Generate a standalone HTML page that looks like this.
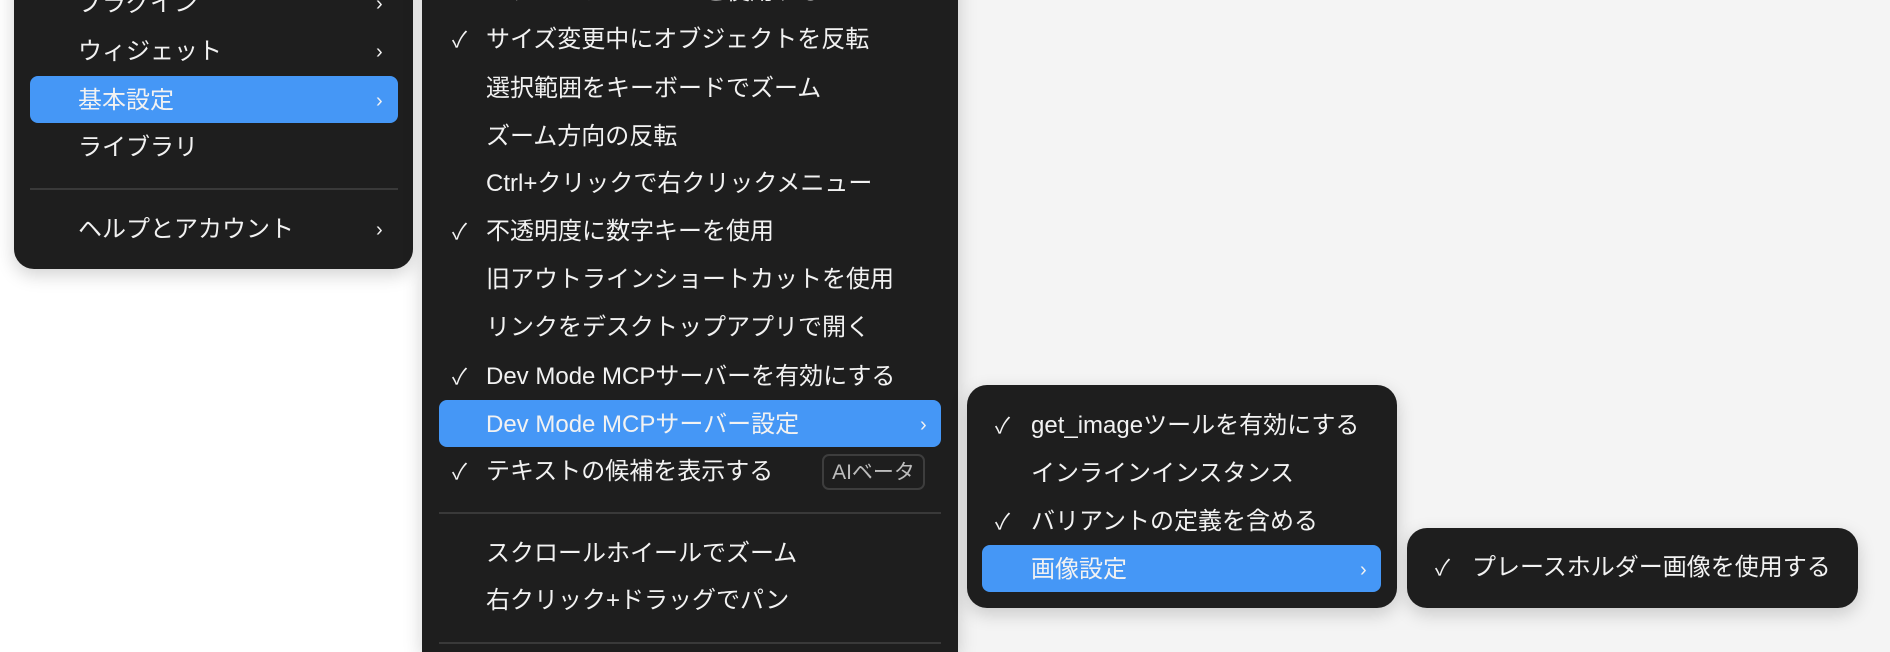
<!DOCTYPE html>
<html><head><meta charset="utf-8"><style>
*{margin:0;padding:0;box-sizing:border-box}
html{width:1890px;height:652px;overflow:hidden}
body{width:1890px;height:652px;overflow:hidden;background:#fff;position:relative;font-family:"Liberation Sans","Noto Sans CJK JP",sans-serif;color:#f2f2f2;font-size:24px}
.gray{position:absolute;left:958px;top:0;width:932px;height:652px;background:#f4f4f4}
.menu{position:absolute;background:#1e1e1e;box-shadow:0 6px 18px rgba(0,0,0,.18);overflow:hidden}
.it{position:absolute;height:48px;line-height:48px;white-space:nowrap;top:0;margin-top:3px}
.hl{position:absolute;background:#4597f6;border-radius:8px}
.ck{position:absolute;font-size:22px}
.chev{position:absolute;font-size:20px}
.div{position:absolute;height:2px;background:#393939}
.badge{position:absolute;border:2px solid #3d3d3d;border-radius:7px;color:#bdbdbd;font-size:21px;line-height:34px;text-align:center}
</style></head><body>
<div class="gray"></div>

<div class="menu" style="left:14px;top:-40px;width:399px;height:309px;border-radius:20px">
  <div class="hl" style="left:16px;top:116px;width:368px;height:47px"></div>
  <div class="it" style="left:64px;top:17px">プラグイン</div><div class="chev it" style="left:362px;top:17px">›</div>
  <div class="it" style="left:64px;top:65px">ウィジェット</div><div class="chev it" style="left:362px;top:65px">›</div>
  <div class="it" style="left:64px;top:114px">基本設定</div><div class="chev it" style="left:362px;top:114px">›</div>
  <div class="it" style="left:64px;top:161px">ライブラリ</div>
  <div class="div" style="left:16px;top:228px;width:368px"></div>
  <div class="it" style="left:64px;top:243px">ヘルプとアカウント</div><div class="chev it" style="left:362px;top:243px">›</div>
</div>

<div class="menu" style="left:422px;top:-40px;width:536px;height:692px;border-radius:0">
  <div class="hl" style="left:17px;top:440px;width:502px;height:47px"></div>
  <div class="it" style="left:64px;top:5px">ピクセルプレビューを使用する</div>
  <div class="ck it" style="left:30px;top:53px">✓</div><div class="it" style="left:64px;top:53px">サイズ変更中にオブジェクトを反転</div>
  <div class="it" style="left:64px;top:102px">選択範囲をキーボードでズーム</div>
  <div class="it" style="left:64px;top:150px">ズーム方向の反転</div>
  <div class="it" style="left:64px;top:197px">Ctrl+クリックで右クリックメニュー</div>
  <div class="ck it" style="left:30px;top:245px">✓</div><div class="it" style="left:64px;top:245px">不透明度に数字キーを使用</div>
  <div class="it" style="left:64px;top:293px">旧アウトラインショートカットを使用</div>
  <div class="it" style="left:64px;top:341px">リンクをデスクトップアプリで開く</div>
  <div class="ck it" style="left:30px;top:390px">✓</div><div class="it" style="left:64px;top:390px">Dev Mode MCPサーバーを有効にする</div>
  <div class="it" style="left:64px;top:438px">Dev Mode MCPサーバー設定</div><div class="chev it" style="left:498px;top:438px">›</div>
  <div class="ck it" style="left:30px;top:485px">✓</div><div class="it" style="left:64px;top:485px">テキストの候補を表示する</div>
  <div class="badge" style="left:400px;top:494px;width:103px;height:36px">AIベータ</div>
  <div class="div" style="left:17px;top:552px;width:502px"></div>
  <div class="it" style="left:64px;top:567px">スクロールホイールでズーム</div>
  <div class="it" style="left:64px;top:614px">右クリック+ドラッグでパン</div>
  <div class="div" style="left:17px;top:682px;width:502px"></div>
</div>

<div class="menu" style="left:967px;top:385px;width:430px;height:223px;border-radius:20px">
  <div class="hl" style="left:15px;top:160px;width:399px;height:47px"></div>
  <div class="ck it" style="left:28px;top:14px">✓</div><div class="it" style="left:64px;top:14px">get_imageツールを有効にする</div>
  <div class="it" style="left:64px;top:62px">インラインインスタンス</div>
  <div class="ck it" style="left:28px;top:110px">✓</div><div class="it" style="left:64px;top:110px">バリアントの定義を含める</div>
  <div class="it" style="left:64px;top:158px">画像設定</div><div class="chev it" style="left:393px;top:158px">›</div>
</div>

<div class="menu" style="left:1407px;top:528px;width:451px;height:80px;border-radius:20px">
  <div class="ck it" style="left:28px;top:13px">✓</div><div class="it" style="left:65px;top:13px">プレースホルダー画像を使用する</div>
</div>
</body></html>
